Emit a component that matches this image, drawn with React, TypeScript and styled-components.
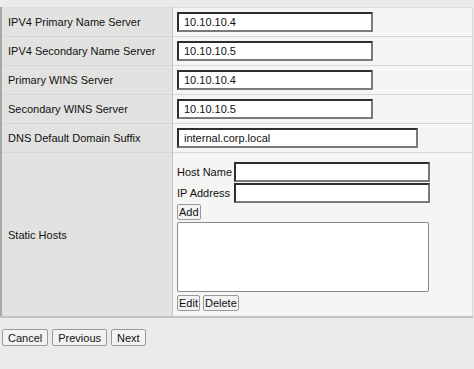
import React from "react";
import styled, { createGlobalStyle } from "styled-components";

const Global = createGlobalStyle`
  html, body { margin: 0; padding: 0; background: #ebebe9; }
  body { font-family: "Liberation Sans", Arial, sans-serif; font-size: 11px; color: #111; }
`;

const Page = styled.div`
  width: 474px;
  height: 369px;
  padding-top: 7px;
  box-sizing: border-box;
`;

const Table = styled.table`
  width: 473px;
  border-collapse: collapse;
  border-left: 2px solid #a8a8a6;
  border-right: 1px solid #dcdcda;
  border-bottom: 2px solid #c4c4c2;
  border-top: 1px solid #dedede;
`;

const Row = styled.tr`
  border-bottom: 1px solid #d6d6d4;
  &:last-child { border-bottom: none; }
`;

const Label = styled.td`
  width: 164px;
  background: #e2e2e0;
  padding: 0 0 0 6px;
  height: 28px;
  border-right: 1px solid #c6c6c4;
  vertical-align: middle;
  font-size: 11px;
`;

const Value = styled.td`
  background: #f5f5f3;
  padding: 0 0 0 4px;
  vertical-align: middle;
`;

const HostsCell = styled(Value)`
  padding: 9px 0 5px 4px;
`;

const Field = styled.input<{ $w?: number; $ml?: number }>`
  width: ${(p) => p.$w ?? 196}px;
  height: 20px;
  box-sizing: border-box;
  border: 2px solid #2e2e2e;
  border-right-color: #7a7a7a;
  border-bottom-color: #7a7a7a;
  background: #fff;
  padding: 0 0 0 5px;
  margin-left: ${(p) => p.$ml ?? 0}px;
  font-family: "Liberation Sans", Arial, sans-serif;
  font-size: 11px;
  color: #111;
  display: block;
`;

const Line = styled.div`
  display: flex;
  align-items: center;
  gap: 2px;
  margin-bottom: 1px;
`;

const Btn = styled.button`
  font-family: "Liberation Sans", Arial, sans-serif;
  font-size: 11px;
  color: #111;
  background: #f3f3f3;
  border: 1px solid #9a9a9a;
  border-radius: 2px;
  height: 16px;
  padding: 0 1px;
  line-height: 14px;
`;

const AddBtn = styled(Btn)`
  margin-top: 1px;
  display: block;
`;

const BtnRow = styled.div`
  display: flex;
  gap: 3px;
`;

const Area = styled.textarea`
  display: block;
  width: 252px;
  height: 70px;
  box-sizing: border-box;
  border: 1px solid #8a8a8a;
  border-radius: 2px;
  background: #fff;
  resize: none;
  margin: 2px 0 3px;
`;

const Footer = styled.div`
  display: flex;
  gap: 4px;
  padding: 11px 0 0 2px;
`;

const FootBtn = styled(Btn)`
  height: 17px;
  padding: 0 5px;
`;

const rows: [string, string, number?][] = [
  ["IPV4 Primary Name Server", "10.10.10.4"],
  ["IPV4 Secondary Name Server", "10.10.10.5"],
  ["Primary WINS Server", "10.10.10.4"],
  ["Secondary WINS Server", "10.10.10.5"],
  ["DNS Default Domain Suffix", "internal.corp.local", 241],
];

export default function App() {
  return (
    <Page>
      <Global />
      <Table>
        <tbody>
          {rows.map(([l, v, w]) => (
            <Row key={l}>
              <Label>{l}</Label>
              <Value>
                <Field $w={w} defaultValue={v} />
              </Value>
            </Row>
          ))}
          <Row>
            <Label>Static Hosts</Label>
            <HostsCell>
              <Line>
                <span>Host Name</span>
                <Field $w={196} />
              </Line>
              <Line>
                <span>IP Address</span>
                <Field $w={196} $ml={2} />
              </Line>
              <AddBtn>Add</AddBtn>
              <Area />
              <BtnRow>
                <Btn>Edit</Btn>
                <Btn>Delete</Btn>
              </BtnRow>
            </HostsCell>
          </Row>
        </tbody>
      </Table>
      <Footer>
        <FootBtn>Cancel</FootBtn>
        <FootBtn>Previous</FootBtn>
        <FootBtn>Next</FootBtn>
      </Footer>
    </Page>
  );
}
